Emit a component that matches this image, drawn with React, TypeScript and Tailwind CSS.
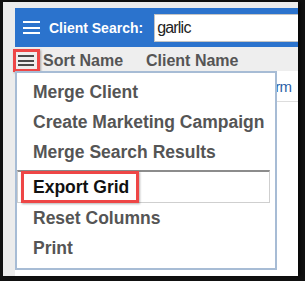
const F = { fontFamily: "'Liberation Sans', Arial, sans-serif" } as const;

const items = ['Merge Client', 'Create Marketing Campaign', 'Merge Search Results'];
const after = ['Reset Columns', 'Print'];

function Bars({ color, w, h, gap }: { color: string; w: string; h: string; gap: string }) {
  return (
    <div className={`flex flex-col ${gap} ${w} shrink-0`}>
      <div className={`${h} ${color}`} />
      <div className={`${h} ${color}`} />
      <div className={`${h} ${color}`} />
    </div>
  );
}

export default function App() {
  return (
    <div className="w-[305px] h-[281px] bg-[#111] pt-[2px] pl-[3px] overflow-hidden" style={F}>
      <div className="relative w-[295px] h-[274px] bg-[#ececec] pt-[6px] pl-[12px] flex flex-col shadow-[3px_0_3px_rgba(0,0,0,0.5)]">
        {/* Search bar */}
        <div className="h-[39px] bg-[#2b73cd] flex items-center pl-[8px] shrink-0">
          <Bars color="bg-white" w="w-[17px]" h="h-[2px]" gap="gap-[3.5px]" />
          <span className="ml-[9px] text-white font-bold text-[14px] leading-none">Client Search:</span>
          <div className="ml-[11px] self-start mt-[6px] h-[28px] flex-1 bg-white border border-[#c4c4c4] border-r-0 flex items-center pl-[2px]">
            <span className="text-[16px] tracking-[-0.8px] text-[#222]">garlic</span>
          </div>
        </div>

        {/* Grid header */}
        <div className="h-[24px] bg-[#eeeeee] flex items-center pt-[3px] pl-[3px] shrink-0">
          <Bars color="bg-[#4a4a4a]" w="w-[16px]" h="h-[2px]" gap="gap-[2.7px]" />
          <span className="ml-[9px] w-[103px] text-[16px] font-bold text-[#555]">Sort Name</span>
          <span className="text-[16px] font-bold text-[#555]">Client Name</span>
        </div>

        {/* Grid body */}
        <div className="flex-1 bg-white">
          <div className="h-[31px] border-b border-[#dddddd] flex items-center justify-end pt-[3px] pr-[7px]">
            <span className="text-[15px] tracking-[-0.9px] text-[#2c5ea6]">Garlic Farm</span>
          </div>
        </div>

        {/* Annotation: hamburger */}
        <div className="absolute left-[10px] top-[47px] w-[27px] h-[23px] border-[3px] border-[#ee4646] shadow-[1px_1px_2px_rgba(0,0,0,0.3)]" />

        {/* Column menu */}
        <div className="absolute left-[12px] top-[69px] w-[262px] h-[199px] bg-white border-2 border-[#a7bcd5] pt-[4px]">
          {items.map((t) => (
            <div key={t} className="pl-[16px] h-[30px] leading-[30px] text-[17.5px] font-bold text-[#555] whitespace-nowrap">
              {t}
            </div>
          ))}
          <div className="relative mt-[3px] mr-[5px] h-[33px] border-t-2 border-t-[#8c8c8c] border-x border-b border-[#cfcfcf] pl-[15px] leading-[30px] text-[17.5px] font-bold text-[#111]">
            Export Grid
            <div className="absolute left-[3px] -top-[1px] w-[118px] h-[32px] border-[3px] border-[#ee4646] shadow-[1px_1px_2px_rgba(0,0,0,0.3)]" />
          </div>
          {after.map((t) => (
            <div key={t} className="pl-[16px] h-[30px] leading-[30px] text-[17.5px] font-bold text-[#555] whitespace-nowrap">
              {t}
            </div>
          ))}
        </div>
      </div>
    </div>
  );
}
